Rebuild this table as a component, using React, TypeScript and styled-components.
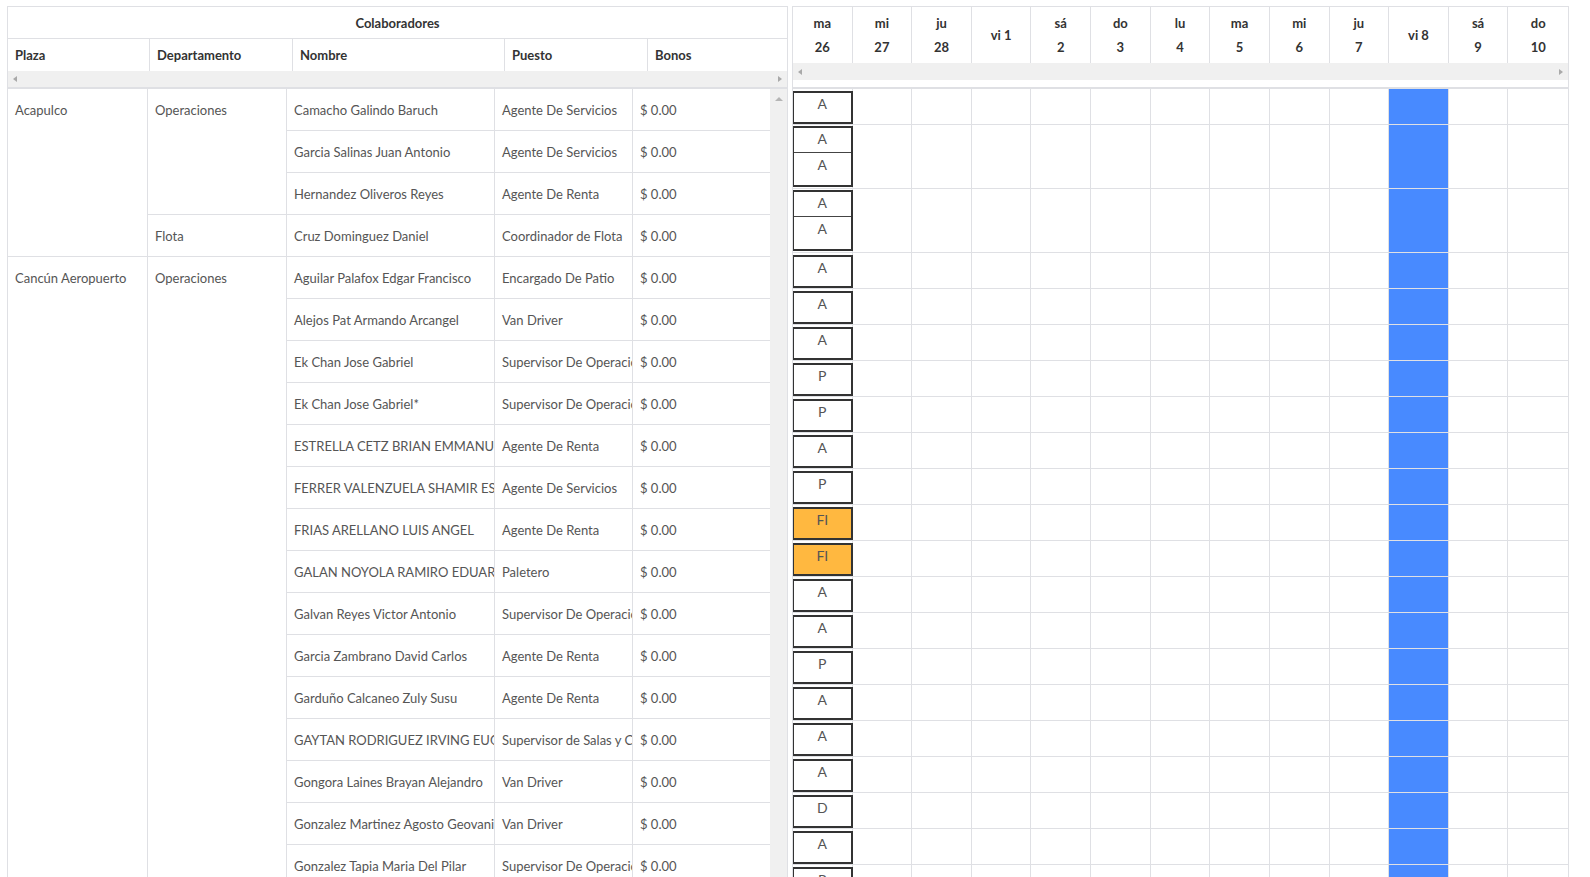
import React from 'react';
import styled, { createGlobalStyle } from 'styled-components';

const LINE = '#dfe0e4';
const SCROLL = '#f0f0f0';

const GlobalStyle = createGlobalStyle`
  html, body { margin: 0; padding: 0; background: #fff; overflow: hidden; }
  body { font-family: Lato, "Noto Sans", sans-serif; }
  * { box-sizing: border-box; }
`;

const Page = styled.div`
  display: flex;
  align-items: stretch;
  gap: 4px;
  padding: 6px 0 0 7px;
  height: 100vh;
`;

/* ---------- shared scroll parts ---------- */
const Arrow = styled.span<{ $dir: 'left' | 'right' | 'up' }>`
  display: block;
  width: 0;
  height: 0;
  border-style: solid;
  border-color: transparent;
  ${(p) =>
    p.$dir === 'left'
      ? `border-width: 3.5px 4px 3.5px 0; border-right-color: #a9a9a9;`
      : p.$dir === 'right'
      ? `border-width: 3.5px 0 3.5px 4px; border-left-color: #a9a9a9;`
      : `border-width: 0 4px 4px 4px; border-bottom-color: #b5b5b5;`}
`;

const HScroll = styled.div<{ $h: number }>`
  height: ${(p) => p.$h}px;
  background: ${SCROLL};
  display: flex;
  align-items: center;
  justify-content: space-between;
  padding: 0 5px;
`;

const HeadRule = styled.div<{ $gap: number }>`
  margin-top: ${(p) => p.$gap}px;
  height: 2px;
  background: ${LINE};
`;

/* ---------- left panel ---------- */
const LeftPanel = styled.section`
  width: 781px;
  display: flex;
  flex-direction: column;
  border-top: 1px solid ${LINE};
  border-left: 1px solid ${LINE};
  border-right: 1px solid ${LINE};
`;

const TitleRow = styled.div`
  height: 32px;
  border-bottom: 1px solid ${LINE};
  display: flex;
  align-items: center;
  justify-content: center;
  font-weight: 700;
  font-size: 13px;
  color: #333;
`;

const ColHeadRow = styled.div`
  display: grid;
  grid-template-columns: 142px 143px 212px 143px 139px;
  height: 32px;
`;

const ColHead = styled.div`
  display: flex;
  align-items: center;
  padding: 0 7px;
  font-weight: 700;
  font-size: 13px;
  color: #333;
  border-right: 1px solid ${LINE};
  &:last-child { border-right: none; }
`;

const LeftBody = styled.div`
  flex: 1;
  display: flex;
  overflow: hidden;
`;

const BodyGrid = styled.div`
  width: 762px;
  display: grid;
  grid-template-columns: 140px 139px 208px 138px 137px;
  grid-auto-rows: 42px;
  align-content: start;
`;

const Cell = styled.div<{ $span?: number; $last?: boolean }>`
  grid-row: span ${(p) => p.$span ?? 1};
  padding: 11px 7px 0 7px;
  line-height: 20px;
  font-size: 13px;
  color: #555;
  white-space: nowrap;
  overflow: hidden;
  border-bottom: 1px solid ${LINE};
  border-right: ${(p) => (p.$last ? 'none' : `1px solid ${LINE}`)};
`;

const VScroll = styled.div`
  width: 17px;
  background: ${SCROLL};
  display: flex;
  justify-content: center;
  padding-top: 8px;
`;

/* ---------- right panel ---------- */
const RightPanel = styled.section`
  width: 777px;
  display: flex;
  flex-direction: column;
  border-top: 1px solid ${LINE};
  border-left: 1px solid ${LINE};
  border-right: 1px solid ${LINE};
`;

const DayHeadRow = styled.div`
  display: grid;
  grid-template-columns: repeat(13, 1fr);
  height: 56px;
`;

const DayHead = styled.div`
  display: flex;
  flex-direction: column;
  align-items: center;
  justify-content: center;
  font-weight: 700;
  font-size: 13px;
  line-height: 24px;
  color: #333;
  border-right: 1px solid ${LINE};
  &:last-child { border-right: none; }
`;

const RightBody = styled.div`
  flex: 1;
  overflow: hidden;
`;

const DayRow = styled.div<{ $h: number }>`
  display: grid;
  grid-template-columns: repeat(13, 1fr);
  height: ${(p) => p.$h}px;
  border-bottom: 1px solid ${LINE};
`;

const DayCell = styled.div<{ $hl?: boolean }>`
  background: ${(p) => (p.$hl ? '#488aff' : 'transparent')};
  border-right: 1px solid ${LINE};
  &:last-child { border-right: none; }
`;

const ShiftBox = styled.div<{ $top: number }>`
  margin: ${(p) => p.$top}px -1px 0 -1px;
  border: 2px solid #333;
  background: #fff;
  display: flex;
  flex-direction: column;
  position: relative;
`;

const ShiftSlot = styled.div<{ $h: number; $fi?: boolean; $pad: number }>`
  height: ${(p) => p.$h}px;
  padding-top: ${(p) => p.$pad}px;
  text-align: center;
  font-size: 14px;
  line-height: 20px;
  color: #555;
  background: ${(p) => (p.$fi ? '#ffb840' : '#fff')};
  & + & { border-top: 1px solid #444; }
`;

/* ---------- data ---------- */
type Person = { name: string; role: string };
type Dept = { name: string; people: Person[] };
type Group = { plaza: string; depts: Dept[] };

const groups: Group[] = [
  {
    plaza: 'Acapulco',
    depts: [
      {
        name: 'Operaciones',
        people: [
          { name: 'Camacho Galindo Baruch', role: 'Agente De Servicios' },
          { name: 'Garcia Salinas Juan Antonio', role: 'Agente De Servicios' },
          { name: 'Hernandez Oliveros Reyes', role: 'Agente De Renta' },
        ],
      },
      { name: 'Flota', people: [{ name: 'Cruz Dominguez Daniel', role: 'Coordinador de Flota' }] },
    ],
  },
  {
    plaza: 'Cancún Aeropuerto',
    depts: [
      {
        name: 'Operaciones',
        people: [
          { name: 'Aguilar Palafox Edgar Francisco', role: 'Encargado De Patio' },
          { name: 'Alejos Pat Armando Arcangel', role: 'Van Driver' },
          { name: 'Ek Chan Jose Gabriel', role: 'Supervisor De Operaciones' },
          { name: 'Ek Chan Jose Gabriel*', role: 'Supervisor De Operaciones' },
          { name: 'ESTRELLA CETZ BRIAN EMMANUEL', role: 'Agente De Renta' },
          { name: 'FERRER VALENZUELA SHAMIR ESTI', role: 'Agente De Servicios' },
          { name: 'FRIAS ARELLANO LUIS ANGEL', role: 'Agente De Renta' },
          { name: 'GALAN NOYOLA RAMIRO EDUARDO', role: 'Paletero' },
          { name: 'Galvan Reyes Victor Antonio', role: 'Supervisor De Operaciones' },
          { name: 'Garcia Zambrano David Carlos', role: 'Agente De Renta' },
          { name: 'Garduño Calcaneo Zuly Susu', role: 'Agente De Renta' },
          { name: 'GAYTAN RODRIGUEZ IRVING EUGENIO', role: 'Supervisor de Salas y Counters' },
          { name: 'Gongora Laines Brayan Alejandro', role: 'Van Driver' },
          { name: 'Gonzalez Martinez Agosto Geovani', role: 'Van Driver' },
          { name: 'Gonzalez Tapia Maria Del Pilar', role: 'Supervisor De Operaciones' },
        ],
      },
    ],
  },
];

const days: { d: string; n?: string }[] = [
  { d: 'ma', n: '26' },
  { d: 'mi', n: '27' },
  { d: 'ju', n: '28' },
  { d: 'vi 1' },
  { d: 'sá', n: '2' },
  { d: 'do', n: '3' },
  { d: 'lu', n: '4' },
  { d: 'ma', n: '5' },
  { d: 'mi', n: '6' },
  { d: 'ju', n: '7' },
  { d: 'vi 8' },
  { d: 'sá', n: '9' },
  { d: 'do', n: '10' },
];

const HIGHLIGHT = 10;

const schedule: string[][] = [
  ['A'],
  ['A', 'A'],
  ['A', 'A'],
  ['A'], ['A'], ['A'], ['P'], ['P'], ['A'], ['P'], ['FI'], ['FI'],
  ['A'], ['A'], ['P'], ['A'], ['A'], ['A'], ['D'], ['A'], ['P'], ['A'],
];

function ShiftCell({ codes }: { codes: string[] }) {
  if (codes.length === 1) {
    return (
      <ShiftBox $top={2}>
        <ShiftSlot $h={29} $pad={1} $fi={codes[0] === 'FI'}>{codes[0]}</ShiftSlot>
      </ShiftBox>
    );
  }
  return (
    <ShiftBox $top={1}>
      <ShiftSlot $h={24} $pad={1} $fi={codes[0] === 'FI'}>{codes[0]}</ShiftSlot>
      <ShiftSlot $h={33} $pad={2} $fi={codes[1] === 'FI'}>{codes[1]}</ShiftSlot>
    </ShiftBox>
  );
}

function LeftRows() {
  const cells: React.ReactNode[] = [];
  groups.forEach((g, gi) => {
    const total = g.depts.reduce((s, d) => s + d.people.length, 0);
    g.depts.forEach((d, di) => {
      d.people.forEach((p, pi) => {
        const k = `${gi}-${di}-${pi}`;
        if (di === 0 && pi === 0) cells.push(<Cell key={k + 'pl'} $span={total}>{g.plaza}</Cell>);
        if (pi === 0) cells.push(<Cell key={k + 'dp'} $span={d.people.length}>{d.name}</Cell>);
        cells.push(<Cell key={k + 'n'}>{p.name}</Cell>);
        cells.push(<Cell key={k + 'r'}>{p.role}</Cell>);
        cells.push(<Cell key={k + 'b'} $last>$ 0.00</Cell>);
      });
    });
  });
  return <BodyGrid>{cells}</BodyGrid>;
}

export default function App() {
  return (
    <>
      <GlobalStyle />
      <Page>
        <LeftPanel>
          <TitleRow>Colaboradores</TitleRow>
          <ColHeadRow>
            <ColHead>Plaza</ColHead>
            <ColHead>Departamento</ColHead>
            <ColHead>Nombre</ColHead>
            <ColHead>Puesto</ColHead>
            <ColHead>Bonos</ColHead>
          </ColHeadRow>
          <HScroll $h={16}>
            <Arrow $dir="left" />
            <Arrow $dir="right" />
          </HScroll>
          <HeadRule $gap={0} />
          <LeftBody>
            <LeftRows />
            <VScroll>
              <Arrow $dir="up" />
            </VScroll>
          </LeftBody>
        </LeftPanel>

        <RightPanel>
          <DayHeadRow>
            {days.map((d, i) => (
              <DayHead key={i}>
                <span>{d.d}</span>
                {d.n && <span>{d.n}</span>}
              </DayHead>
            ))}
          </DayHeadRow>
          <HScroll $h={17}>
            <Arrow $dir="left" />
            <Arrow $dir="right" />
          </HScroll>
          <HeadRule $gap={7} />
          <RightBody>
            {schedule.map((codes, ri) => (
              <DayRow key={ri} $h={codes.length > 1 ? 64 : 36}>
                {days.map((_, ci) => (
                  <DayCell key={ci} $hl={ci === HIGHLIGHT}>
                    {ci === 0 && <ShiftCell codes={codes} />}
                  </DayCell>
                ))}
              </DayRow>
            ))}
          </RightBody>
        </RightPanel>
      </Page>
    </>
  );
}
